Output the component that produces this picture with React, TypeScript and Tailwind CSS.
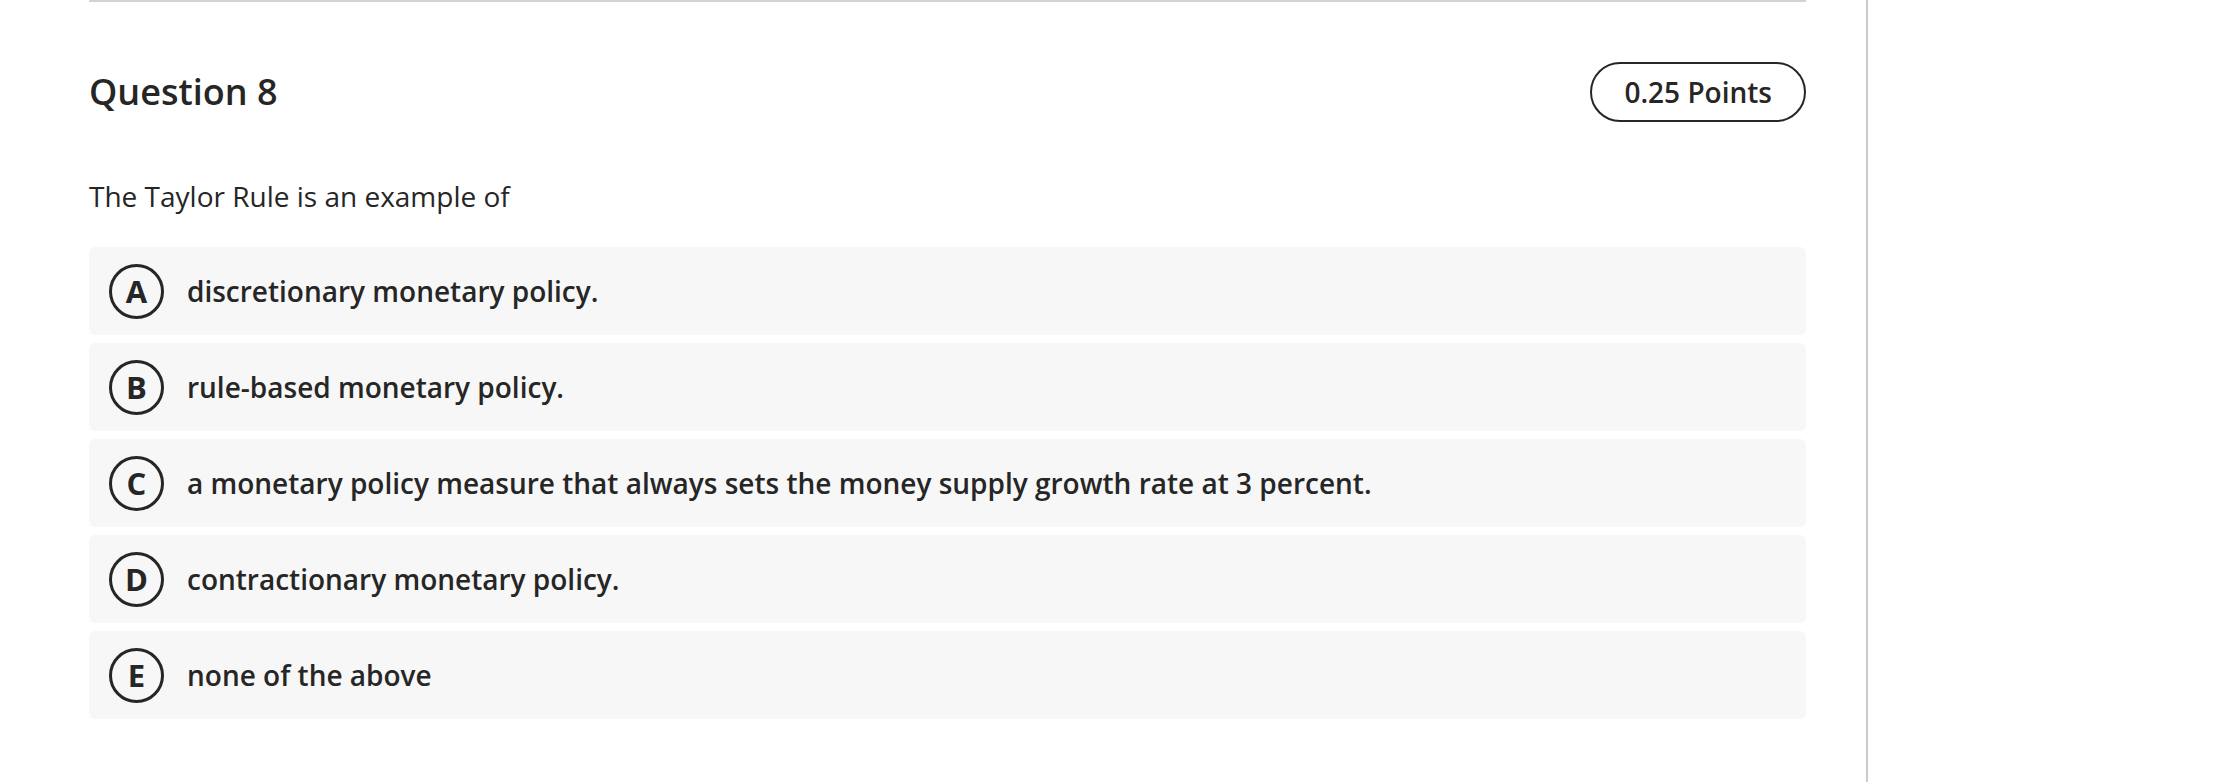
import React from 'react';

const options = [
  { key: 'A', text: 'discretionary monetary policy.' },
  { key: 'B', text: 'rule-based monetary policy.' },
  { key: 'C', text: 'a monetary policy measure that always sets the money supply growth rate at 3 percent.' },
  { key: 'D', text: 'contractionary monetary policy.' },
  { key: 'E', text: 'none of the above' },
];

export default function App() {
  return (
    <div className="flex h-[782px] w-[2228px] overflow-hidden bg-white font-['Open_Sans',sans-serif] text-[#262626]">
      <main className="h-full w-[1868px] shrink-0 border-r-2 border-[#cbcbcb] pl-[89px] pr-[60px]">
        <div className="h-[2px] bg-[#d2d2d2]" />

        <div className="mt-[60px] flex h-[60px] items-center justify-between">
          <h2 className="text-[36px] font-semibold leading-none">Question 8</h2>
          <span className="flex h-[60px] items-center rounded-full border-2 border-[#262626] px-[32px] text-[28px] font-semibold leading-none">
            0.25 Points
          </span>
        </div>

        <p className="mt-[54px] text-[28px] leading-[40px]">The Taylor Rule is an example of</p>

        <ul className="mt-[31px] flex flex-col gap-[8px]">
          {options.map((opt) => (
            <li key={opt.key} className="flex h-[88px] items-center gap-[23px] rounded-[6px] bg-[#f7f7f7] pl-[20px]">
              <span className="flex h-[55px] w-[55px] shrink-0 items-center justify-center rounded-full border-[3px] border-[#262626] text-[31px] font-bold leading-none">
                {opt.key}
              </span>
              <span className="text-[28px] font-semibold leading-none">{opt.text}</span>
            </li>
          ))}
        </ul>
      </main>
      <aside className="flex-1" />
    </div>
  );
}
